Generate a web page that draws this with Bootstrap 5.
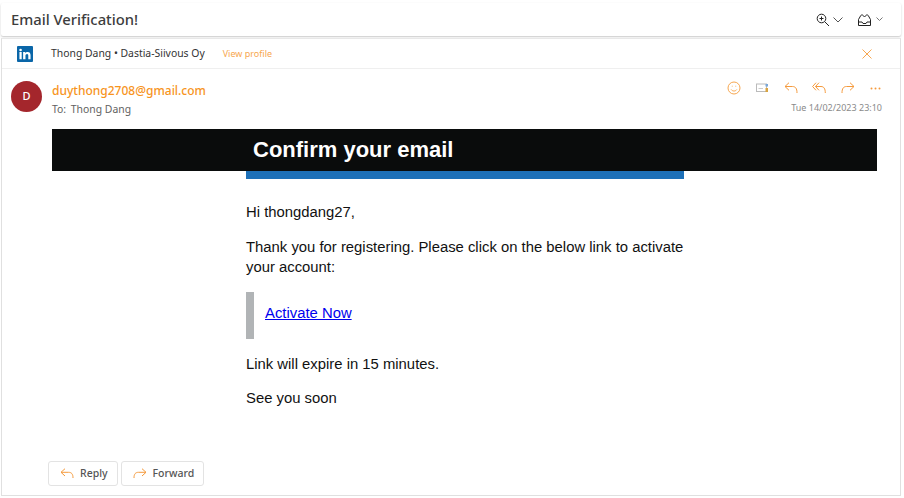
<!DOCTYPE html>
<html lang="en">
<head>
    <meta charset="UTF-8">
    <title>Email Verification!</title>
    <link href="https://cdn.jsdelivr.net/npm/bootstrap@5.3.3/dist/css/bootstrap.min.css" rel="stylesheet">
    <style>
        html, body { height: 498px; overflow: hidden; background: #fff; }
        body { font-family: "Noto Sans", sans-serif; padding: 3px 3px 2px 1px; }
        svg { display: block; fill: none; }
        .subject-bar { height: 33px; padding: 0 18px 0 10px; box-shadow: 0 1px 2px rgba(0,0,0,.22); border-radius: 2px; }
        .subject-title { font-size: 14.8px; font-weight: 500; color: #3d3d3d; margin: 0; }
        .mail-panel { height: 458px; margin-top: 2px; border: 1px solid #e0e0e0; border-top-color: #e8e8e8; }
        .li-strip { height: 30px; padding: 0 28px 0 15px; border-bottom: 1px solid #efefef; }
        .li-name { font-size: 10.4px; color: #333; margin-left: 18px; }
        .li-view { font-size: 9px; color: #f7a750; margin-left: 18px; }
        .mail-head { height: 60px; padding: 12px 18px 0 9px; }
        .avatar { width: 31px; height: 31px; background: #a4262c; color: #fff; font-size: 11px; font-weight: 500; border-radius: 50%; margin-right: 10px; flex: none; }
        .sender { font-size: 12px; font-weight: 500; color: #f7941d; line-height: 17px; margin-top: 1px; }
        .to-line { font-size: 10.4px; color: #616161; line-height: 14px; margin-top: 3px; }
        .to-line span { margin-left: 2px; }
        .mail-when { font-size: 9px; color: #8a8a8a; margin-top: 6px; }
        .head-actions { gap: 14.8px; margin-right: 1px; }
        .msg-body { margin-left: 50px; margin-right: 23px; font-family: "Liberation Sans", Arial, sans-serif; font-size: 14.85px; line-height: 20px; color: #111; }
        .email-heading { height: 42px; background: #0a0c0c; padding-left: 201px; color: #fff; font-size: 22px; font-weight: 700; line-height: 42px; }
        .email-col { width: 438px; margin-left: 194px; }
        .blue-rule { height: 8px; background: #1d70b8; margin-bottom: 23px; }
        .email-col p { margin-bottom: 15px; }
        .email-col p.expire-line { margin-bottom: 14px; }
        .inset-link { border-left: 8px solid #b1b4b6; padding: 11px 0 16px 11px; margin: 15px 0 15px; }
        .inset-link a { color: #0000ee; }
        .foot-actions { margin: 53px 0 0 46px; gap: 3px; }
        .foot-btn { height: 25px; padding: 0 9px 0 11px; font-size: 10.5px; font-weight: 500; color: #555; background: #fff; border: 1px solid #e3e3e3; border-radius: 3px; gap: 6px; }
    </style>
</head>
<body>
    <div class="subject-bar d-flex align-items-center justify-content-between">
        <h1 class="subject-title">Email Verification!</h1>
        <div class="d-flex align-items-center">
            <svg width="14" height="14" viewBox="0 0 14 14" stroke="#222"><circle cx="5.500" cy="5.500" r="4.300"/><path d="M8.700 8.700L13 13M3.500 5.500h4M5.500 3.500v4"/></svg>
            <svg style="margin-left:3px" width="10" height="6" viewBox="0 0 10 6" stroke="#555"><path d="M.5.500L5 5L9.500 .5"/></svg>
            <svg style="margin-left:15px" width="13" height="12" viewBox="0 0 13 12" stroke="#222"><path d="M.5 5.500V11.500H12.500V5.500L10.500 2L9 .5L6.500 3L4 .5L2.500 2ZM.5 8H4L5 9.500H8L9 8H12.500"/></svg>
            <svg style="margin-left:5px" width="7" height="5" viewBox="0 0 7 5" stroke="#777"><path d="M.5.500L3.500 3.500L6.500 .5"/></svg>
        </div>
    </div>

    <div class="mail-panel">
        <div class="li-strip d-flex align-items-center">
            <svg width="16" height="16" viewBox="0 0 17 17"><rect width="17" height="17" rx="1" fill="#0a66a8"/><path d="M2.600 6.500H5V14H2.600ZM3.800 2.800a1.400 1.400 0 1 1 0 2.800a1.400 1.400 0 0 1 0-2.800ZM6.500 6.500H8.800V7.500C9.300 6.800 10.100 6.300 11.300 6.300C13.500 6.300 14.400 7.600 14.400 9.800V14H12V10.300C12 9.200 11.700 8.400 10.700 8.400C9.600 8.400 9 9.200 9 10.300V14H6.500Z" fill="#fff"/></svg>
            <span class="li-name">Thong Dang • Dastia-Siivous Oy</span>
            <span class="li-view">View profile</span>
            <svg class="ms-auto" width="10" height="10" viewBox="0 0 10 10" stroke="#f7a750"><path d="M.5.500L9.500 9.500M9.500 .5L.5 9.500"/></svg>
        </div>

        <div class="mail-head d-flex">
            <div class="avatar d-flex align-items-center justify-content-center">D</div>
            <div class="flex-grow-1">
                <div class="sender">duythong2708@gmail.com</div>
                <div class="to-line">To: <span>Thong Dang</span></div>
            </div>
            <div class="d-flex flex-column align-items-end">
                <div class="d-flex align-items-center head-actions">
                    <svg width="14" height="14" viewBox="0 0 14 14" stroke="#f7a750"><circle cx="7" cy="7" r="6"/><path d="M4.200 8.500C5.500 10.500 8.500 10.500 9.800 8.500M4.800 5.200h.8M8.400 5.200h.8"/></svg>
                    <svg width="13" height="10" viewBox="0 0 13 10"><rect x=".5" y="1" width="10" height="7.500" stroke="#bbb"/><path d="M2.500 5.500H7" stroke="#ccc"/><rect x="9.500" y="1" width="2.500" height="2.500" fill="#7aa7d8"/><rect x="9.500" y="5" width="2.500" height="4" fill="#d9a441"/></svg>
                    <svg width="14" height="12" viewBox="0 0 14 12" stroke="#f59a3c"><path d="M5 .7L1 4.500L5 8.300M1 4.500H8.500C11.500 4.500 13 6.500 13 11"/></svg>
                    <svg width="14" height="12" viewBox="0 0 14 12" stroke="#f59a3c"><path d="M4 .7L.6 4.500L4 8.300M7 .7L3.500 4.500L7 8.300M3.500 4.500H9C11.800 4.500 13.300 6.500 13.300 11"/></svg>
                    <svg width="14" height="12" viewBox="0 0 14 12" stroke="#f59a3c"><path d="M9 .7L13 4.500L9 8.300M13 4.500H5.500C2.500 4.500 1 6.500 1 11"/></svg>
                    <svg width="11" height="3" viewBox="0 0 11 3"><circle cx="1.500" cy="1.500" r="1" fill="#f59a3c"/><circle cx="5.500" cy="1.500" r="1" fill="#f59a3c"/><circle cx="9.500" cy="1.500" r="1" fill="#f59a3c"/></svg>
                </div>
                <div class="mail-when">Tue 14/02/2023 23:10</div>
            </div>
        </div>

        <div class="msg-body">
            <div class="email-heading">Confirm your email</div>
            <div class="email-col">
                <div class="blue-rule"></div>
                <p>Hi thongdang27,</p>
                <p>Thank you for registering. Please click on the below link to activate your account:</p>
                <div class="inset-link"><a href="#">Activate Now</a></div>
                <p class="expire-line">Link will expire in 15 minutes.</p>
                <p class="mb-0">See you soon</p>
            </div>
        </div>

        <div class="foot-actions d-flex">
            <button class="foot-btn d-flex align-items-center" type="button">
                <svg width="14" height="11" viewBox="0 0 14 11" stroke="#f59a3c"><path d="M5 .7L1 4.300L5 8M1 4.300H8.500C11.500 4.300 13 6 13 10"/></svg>
                Reply
            </button>
            <button class="foot-btn d-flex align-items-center" type="button">
                <svg width="14" height="11" viewBox="0 0 14 11" stroke="#f59a3c"><path d="M9 .7L13 4.300L9 8M13 4.300H5.500C2.500 4.300 1 6 1 10"/></svg>
                Forward
            </button>
        </div>
    </div>
    <script src="https://cdn.jsdelivr.net/npm/bootstrap@5.3.3/dist/js/bootstrap.bundle.min.js"></script>
</body>
</html>
